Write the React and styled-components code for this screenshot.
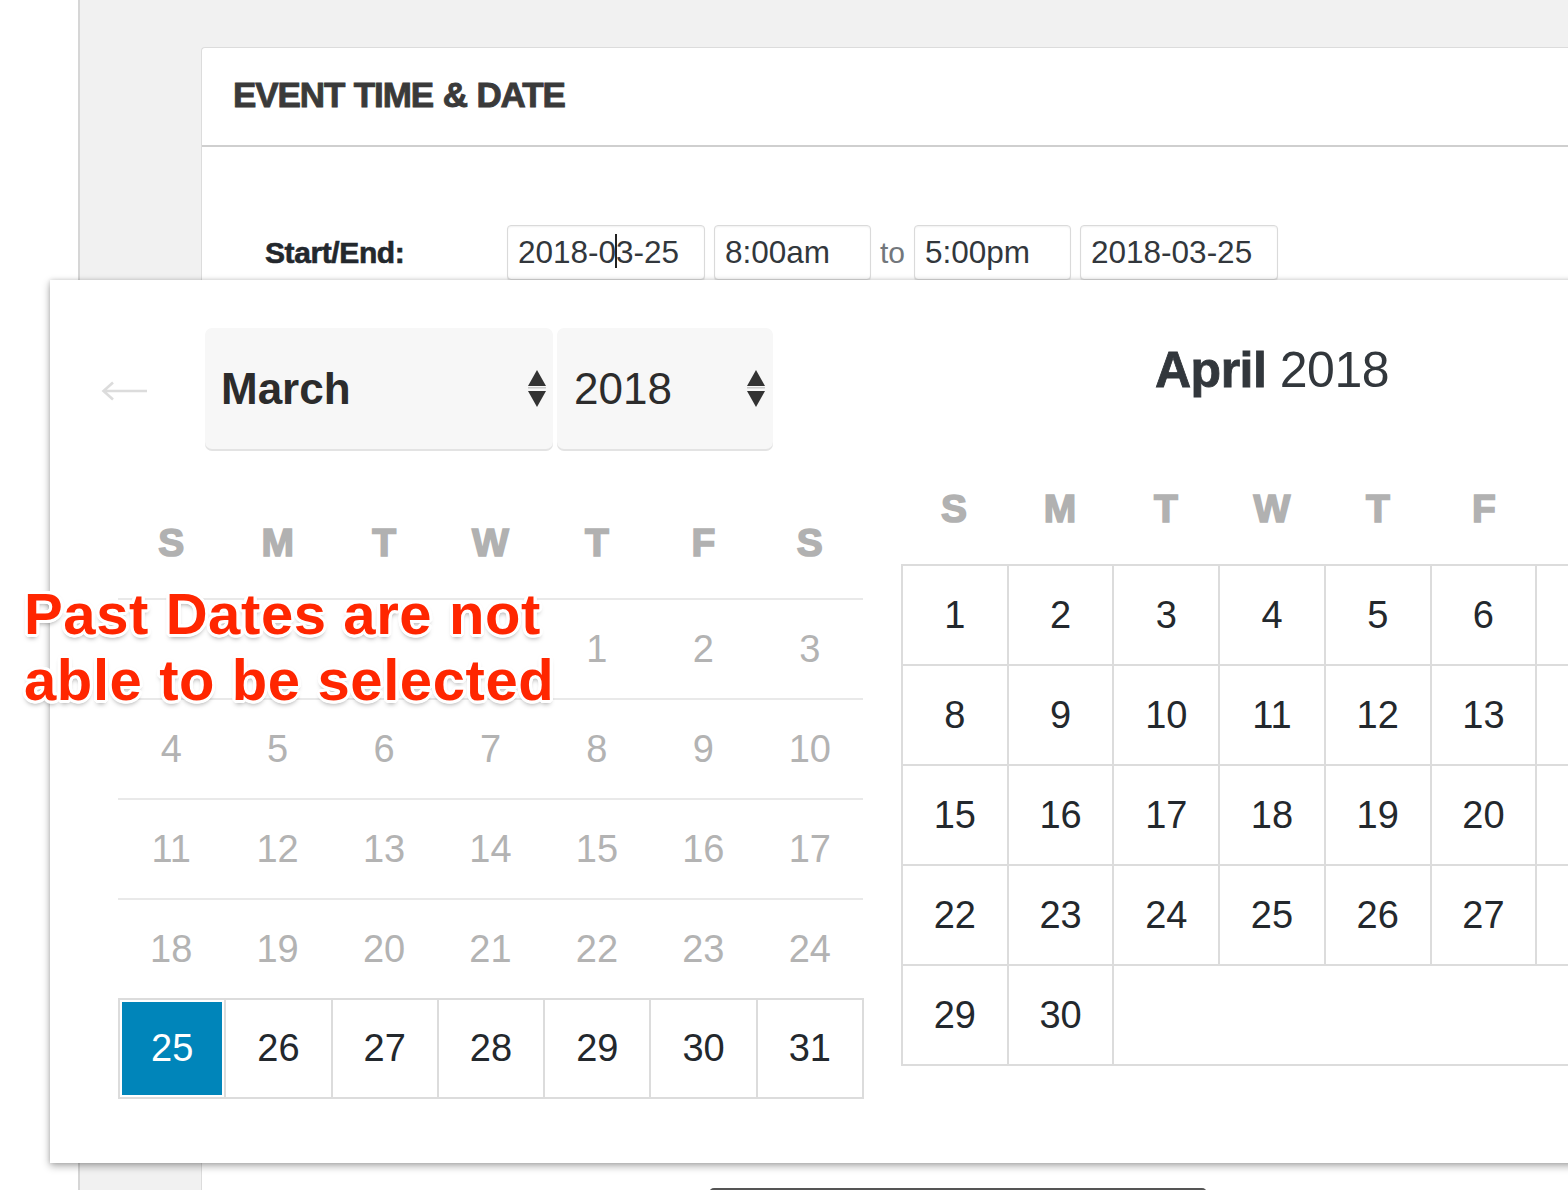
import React from 'react';
import styled, { createGlobalStyle } from 'styled-components';

const GlobalStyle = createGlobalStyle`
  html, body { margin: 0; padding: 0; background: #fff; }
  body { font-family: "Liberation Sans", Arial, sans-serif; overflow: hidden; }
  * { box-sizing: border-box; }
`;

const Page = styled.div`
  position: relative;
  display: flex;
  width: 1568px;
  height: 1190px;
  overflow: hidden;
`;

const Sidebar = styled.div`
  width: 80px;
  flex-shrink: 0;
  background: #fff;
  border-right: 2px solid #d6d6d6;
`;

const Main = styled.main`
  flex: 1;
  min-width: 0;
  background: #f1f1f1;
  padding: 47px 0 0 121px;
`;

const Card = styled.section`
  width: 1500px;
  min-height: 1300px;
  background: #fff;
  border: 1px solid #dcdcdc;
  border-right: none;
  border-radius: 4px 0 0 0;
`;

const CardHeader = styled.header`
  height: 99px;
  display: flex;
  align-items: center;
  padding: 0 0 4px 31px;
  border-bottom: 2px solid #cfcfcf;
`;

const CardTitle = styled.h2`
  margin: 0;
  font-size: 35px;
  font-weight: 700;
  letter-spacing: -1.1px;
  word-spacing: 1px;
  color: #3a3a3a;
  -webkit-text-stroke: 0.9px #3a3a3a;
`;

const CardBody = styled.div`
  padding: 78px 0 0 63px;
`;

const FieldRow = styled.div`
  display: flex;
  align-items: center;
  gap: 9px;
`;

const FieldLabel = styled.label`
  width: 233px;
  font-size: 30px;
  font-weight: 700;
  color: #23282d;
  letter-spacing: -0.4px;
  -webkit-text-stroke: 0.6px #23282d;
`;

const Field = styled.div`
  width: ${(p) => p.$w}px;
  height: 55px;
  display: flex;
  align-items: center;
  padding: 0 10px;
  border: 1px solid #dadada;
  border-radius: 4px;
  box-shadow: inset 0 1px 2px rgba(0, 0, 0, 0.06), 0 1px 1px rgba(0, 0, 0, 0.08);
  font-size: 31.5px;
  color: #32373c;
  background: #fff;
  white-space: nowrap;
`;

const Caret = styled.span`
  display: inline-block;
  width: 2px;
  height: 34px;
  background: #222;
  margin: 0 -1px;
  vertical-align: middle;
  position: relative;
  top: -2px;
`;

const ToText = styled.span`
  font-size: 30px;
  color: #72777c;
`;

const SaveBar = styled.div`
  margin: 908px 0 0 444px;
  width: 498px;
  height: 12px;
  background: #555;
  border-radius: 5px 5px 0 0;
`;

const Popup = styled.div`
  position: absolute;
  left: 50px;
  top: 280px;
  width: 1660px;
  height: 883px;
  background: #fff;
  box-shadow: 0 3px 8px rgba(0, 0, 0, 0.33), 0 0 4px rgba(0, 0, 0, 0.12);
  display: flex;
  align-items: flex-start;
  padding: 48px 0 0 51px;
`;

const MonthColumn = styled.div`
  display: flex;
  flex-direction: column;
  width: ${(p) => p.$w}px;
  margin-left: ${(p) => p.$ml || 0}px;
`;

const NavRow = styled.div`
  display: flex;
  align-items: center;
  height: 121px;
`;

const PrevButton = styled.button`
  border: none;
  background: none;
  padding: 0;
  margin: 4px 58px 0 0;
  width: 46px;
  height: 20px;
  display: flex;
  cursor: pointer;
`;

const Select = styled.div`
  width: ${(p) => p.$w}px;
  height: 121px;
  margin-left: ${(p) => p.$ml || 0}px;
  display: flex;
  align-items: center;
  justify-content: space-between;
  padding: 0 ${(p) => p.$pr}px 0 ${(p) => p.$pl}px;
  background: #f7f7f7;
  border-radius: 7px;
  box-shadow: 0 2px 0 #e3e3e3;
  font-size: 44px;
  font-weight: ${(p) => (p.$bold ? 700 : 400)};
  color: #2c2c2c;
`;

const WeekdayRow = styled.div`
  display: grid;
  grid-template-columns: repeat(7, 1fr);
  height: 90px;
  align-items: center;
  margin: ${(p) => p.$mt}px 0 10px ${(p) => p.$ml || 0}px;
  width: ${(p) => p.$w || 745}px;
`;

const Weekday = styled.div`
  text-align: center;
  font-size: 39px;
  font-weight: 700;
  color: #b1b1b1;
  -webkit-text-stroke: 1.6px #b1b1b1;
`;

const WeekLine = styled.div`
  display: grid;
  grid-template-columns: repeat(7, 1fr);
  width: 745px;
  margin-left: 17px;
  height: 100px;
  border-top: 2px solid #e9e9e9;
`;

const DayNum = styled.div`
  display: flex;
  align-items: center;
  justify-content: center;
  font-size: 38px;
  color: ${(p) => (p.$past ? '#b3b3b3' : '#23282d')};
`;

const BorderedGrid = styled.div`
  display: grid;
  grid-template-columns: repeat(7, 1fr);
  width: ${(p) => p.$w}px;
  margin-left: ${(p) => p.$ml || 0}px;
  border-top: 2px solid #dcdcdc;
  border-left: 2px solid #dcdcdc;
`;

const GridCell = styled.div`
  height: ${(p) => p.$h}px;
  grid-column: span ${(p) => p.$span || 1};
  display: flex;
  align-items: center;
  justify-content: center;
  border-bottom: 2px solid #dcdcdc;
  border-right: ${(p) => (p.$noRight ? 'none' : '2px solid #dcdcdc')};
  padding: 2px;
  font-size: 38px;
  color: #23282d;
`;

const Selected = styled.span`
  width: 100%;
  height: 100%;
  display: flex;
  align-items: center;
  justify-content: center;
  background: #0085ba;
  color: #fff;
`;

const MonthTitle = styled.div`
  height: 84px;
  line-height: 84px;
  text-align: center;
  font-size: 50px;
  color: #32373c;
  letter-spacing: -0.5px;
  b { font-weight: 700; -webkit-text-stroke: 0.8px #32373c; }
`;

const Annotation = styled.div`
  position: absolute;
  left: 24px;
  top: 581px;
  font-family: "Liberation Sans", Arial, sans-serif;
  font-size: 58px;
  line-height: 66px;
  font-weight: 700;
  color: #ff2600;
  letter-spacing: 0.6px;
  text-shadow: 3px 0 #fff, -3px 0 #fff, 0 3px #fff, 0 -3px #fff, 2px 2px #fff,
    -2px -2px #fff, 2px -2px #fff, -2px 2px #fff, 3px 1px #fff, -3px 1px #fff,
    3px -1px #fff, -3px -1px #fff, 1px 3px #fff, -1px 3px #fff, 1px -3px #fff,
    -1px -3px #fff, 0 4px 5px rgba(0, 0, 0, 0.35), 0 0 4px rgba(0, 0, 0, 0.2);
`;

const Arrows = () => (
  <svg width="18" height="37" viewBox="0 0 18 37">
    <path d="M9 0 L18 16 L0 16 Z" fill="#333" />
    <rect x="0" y="17" width="18" height="1.5" fill="#ccc" />
    <path d="M0 21 L18 21 L9 37 Z" fill="#333" />
  </svg>
);

const LeftArrow = () => (
  <svg width="46" height="20" viewBox="0 0 46 20">
    <path d="M46 10 H3 M12 1.5 L2.5 10 L12 18.5" stroke="#dcdcdc" strokeWidth="2.6" fill="none" />
  </svg>
);

const DAYS = ['S', 'M', 'T', 'W', 'T', 'F', 'S'];

const marchPast = [
  [null, null, null, null, 1, 2, 3],
  [4, 5, 6, 7, 8, 9, 10],
  [11, 12, 13, 14, 15, 16, 17],
  [18, 19, 20, 21, 22, 23, 24],
];
const marchActive = [25, 26, 27, 28, 29, 30, 31];

const april = [
  [1, 2, 3, 4, 5, 6, 7],
  [8, 9, 10, 11, 12, 13, 14],
  [15, 16, 17, 18, 19, 20, 21],
  [22, 23, 24, 25, 26, 27, 28],
];

export default function App() {
  return (
    <>
      <GlobalStyle />
      <Page>
        <Sidebar />
        <Main>
          <Card>
            <CardHeader>
              <CardTitle>EVENT TIME &amp; DATE</CardTitle>
            </CardHeader>
            <CardBody>
              <FieldRow>
                <FieldLabel>Start/End:</FieldLabel>
                <Field $w={198}>
                  2018-0<Caret />3-25
                </Field>
                <Field $w={157}>8:00am</Field>
                <ToText>to</ToText>
                <Field $w={157}>5:00pm</Field>
                <Field $w={198}>2018-03-25</Field>
              </FieldRow>
              <SaveBar />
            </CardBody>
          </Card>
        </Main>

        <Popup>
          <MonthColumn $w={762}>
            <NavRow>
              <PrevButton aria-label="Previous month">
                <LeftArrow />
              </PrevButton>
              <Select $w={348} $pl={16} $pr={7} $bold>
                <span>March</span>
                <Arrows />
              </Select>
              <Select $w={216} $pl={17} $pr={8} $ml={4}>
                <span>2018</span>
                <Arrows />
              </Select>
            </NavRow>
            <WeekdayRow $mt={49} $ml={17}>
              {DAYS.map((d, i) => (
                <Weekday key={i}>{d}</Weekday>
              ))}
            </WeekdayRow>
            {marchPast.map((week, wi) => (
              <WeekLine key={wi}>
                {week.map((d, di) => (
                  <DayNum key={di} $past>
                    {d}
                  </DayNum>
                ))}
              </WeekLine>
            ))}
            <BorderedGrid $w={746} $ml={17}>
              {marchActive.map((d, i) => (
                <GridCell key={d} $h={99}>
                  {i === 0 ? <Selected>{d}</Selected> : d}
                </GridCell>
              ))}
            </BorderedGrid>
          </MonthColumn>

          <MonthColumn $w={742} $ml={38}>
            <MonthTitle>
              <b>April</b> 2018
            </MonthTitle>
            <WeekdayRow $mt={52} $w={742}>
              {DAYS.map((d, i) => (
                <Weekday key={i}>{d}</Weekday>
              ))}
            </WeekdayRow>
            <BorderedGrid $w={742}>
              {april.flat().map((d) => (
                <GridCell key={d} $h={100}>
                  {d}
                </GridCell>
              ))}
              <GridCell $h={100}>29</GridCell>
              <GridCell $h={100}>30</GridCell>
              <GridCell $h={100} $span={5} $noRight />
            </BorderedGrid>
          </MonthColumn>
        </Popup>

        <Annotation>
          Past Dates are not
          <br />
          able to be selected
        </Annotation>
      </Page>
    </>
  );
}
